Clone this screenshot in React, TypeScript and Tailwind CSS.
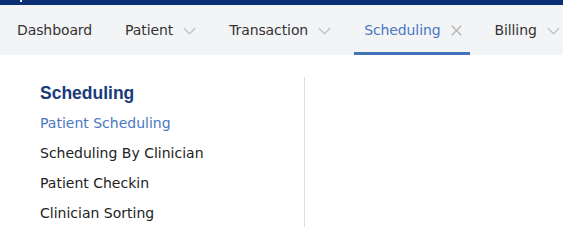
import React from "react";

const Chevron = () => (
  <svg width="13" height="8" viewBox="0 0 13 8" fill="none" stroke="#c4c4c4" strokeWidth="1.4">
    <path d="M0.8 1l5.7 5.8L12.2 1" />
  </svg>
);

const Close = () => (
  <svg width="11" height="11" viewBox="0 0 11 11" fill="none" stroke="#b9b9b9" strokeWidth="1.6">
    <path d="M0.8 0.8l9.4 9.4M10.2 0.8L0.8 10.2" />
  </svg>
);

const tabs = [
  { label: "Dashboard", icon: null },
  { label: "Patient", icon: "chevron" },
  { label: "Transaction", icon: "chevron" },
  { label: "Scheduling", icon: "close", active: true },
  { label: "Billing", icon: "chevron" },
];

const links = ["Patient Scheduling", "Scheduling By Clinician", "Patient Checkin", "Clinician Sorting"];

export default function App() {
  return (
    <div className="w-[563px] h-[249px] overflow-hidden bg-white font-['DejaVu_Sans',Verdana,sans-serif]">
      {/* top strip */}
      <div className="h-[5px] bg-[#0b2f73] flex">
        <div className="ml-[20px] w-[2px] h-[2px] bg-[#e8ecf3]" />
      </div>

      {/* tab bar */}
      <div className="h-[50px] bg-[#f3f4f6] flex items-stretch pl-[7px] gap-[15px] whitespace-nowrap">
        {tabs.map(t => (
          <div
            key={t.label}
            className={`flex items-center gap-[10px] pl-[10px] pr-[8px] pt-[4px] border-b-[3px] text-[14px] tracking-[-0.1px] ${
              t.active ? "border-[#4473b9] text-[#4a78c2]" : "border-transparent text-[#333]"
            }`}
          >
            <span>{t.label}</span>
            {t.icon === "chevron" && <Chevron />}
            {t.icon === "close" && <Close />}
          </div>
        ))}
      </div>

      {/* dropdown panel */}
      <div className="flex pt-[22px]">
        <div className="w-[305px] pl-[40px] border-r border-[#dedede] h-[150px]">
          <div className="font-['Liberation_Sans',Arial,sans-serif] text-[17.5px] font-bold text-[#1a3a7c] leading-[30px] mt-[1px]">
            Scheduling
          </div>
          {links.map((l, i) => (
            <div
              key={l}
              className={`text-[14px] leading-[30px] ${i === 0 ? "text-[#4a78c2]" : "text-[#222]"}`}
            >
              {l}
            </div>
          ))}
        </div>
      </div>
    </div>
  );
}
